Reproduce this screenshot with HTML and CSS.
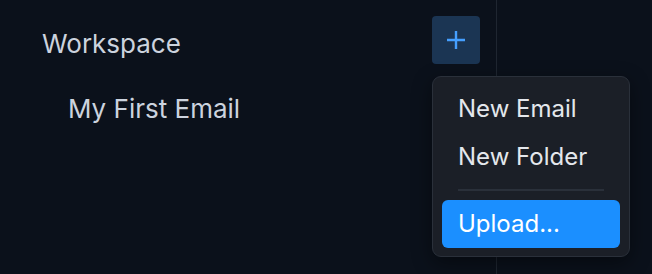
FILE: index.html
```html
<!DOCTYPE html>
<html>
<head>
<meta charset="utf-8">
<link rel="stylesheet" href="styles.css">
</head>
<body>
<div class="app">
  <aside class="sidebar">
    <div class="header">
      <div class="label">Workspace</div>
      <button class="add-btn" aria-label="Add">
        <svg width="20" height="20" viewBox="0 0 20 20"><path d="M10 1v18M1 10h18" stroke="#459fff" stroke-width="2.4" fill="none"/></svg>
      </button>
    </div>
    <div class="tree">
      <div class="tree-item">My First Email</div>
    </div>
    <div class="menu">
      <div class="menu-item">New Email</div>
      <div class="menu-item">New Folder</div>
      <div class="sep"></div>
      <div class="menu-item active">Upload...</div>
    </div>
  </aside>
  <main class="content"></main>
</div>
</body>
</html>
```
FILE: styles.css
```css
* { box-sizing: border-box; }
html, body { margin: 0; padding: 0; }
body {
  background: #0b111b;
  font-family: Inter, "Noto Sans", sans-serif;
  width: 652px;
  height: 274px;
  overflow: hidden;
}
.app { display: flex; height: 274px; }
.sidebar {
  position: relative;
  width: 497px;
  border-right: 1px solid #1f2631;
  padding: 16px 16px 0 42px;
}
.header {
  display: flex;
  justify-content: space-between;
  align-items: flex-start;
}
.label {
  margin-top: 10px;
  font-size: 26px;
  line-height: 36px;
  color: #ccd3de;
}
.add-btn {
  width: 48px;
  height: 48px;
  border: 0;
  padding: 0;
  border-radius: 4px;
  background: #1b3553;
  display: flex;
  align-items: center;
  justify-content: center;
}
.tree { padding-left: 26px; margin-top: 27px; }
.tree-item {
  font-size: 26px;
  line-height: 36px;
  color: #ccd3de;
}
.menu {
  position: absolute;
  top: 76px;
  left: 432px;
  width: 198px;
  padding: 8px 9px;
  background: #1b1f27;
  border: 1px solid #2a303a;
  border-radius: 9px;
  box-shadow: 0 6px 20px rgba(0,0,0,0.45);
}
.menu-item {
  height: 48px;
  padding: 0 16px;
  font-size: 24px;
  line-height: 48px;
  color: #e4e7ec;
  border-radius: 6px;
}
.menu-item.active { background: #1b8fff; color: #ffffff; }
.sep {
  height: 2px;
  margin: 8px 16px 9px;
  background: #2a303a;
}
.content { flex: 1; }
```
